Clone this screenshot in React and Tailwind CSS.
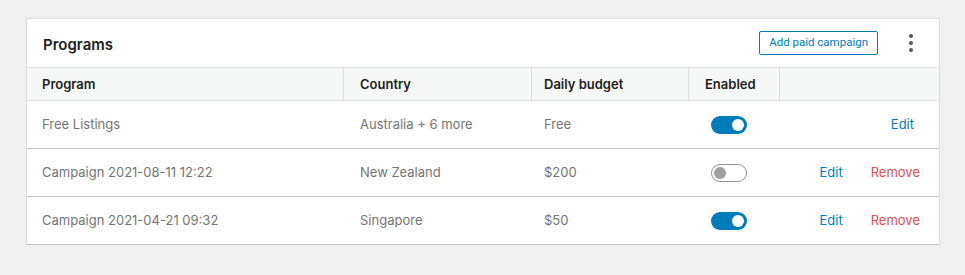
const rows = [
  { name: 'Free Listings', country: 'Australia + 6 more', budget: 'Free', enabled: true, removable: false },
  { name: 'Campaign 2021-08-11 12:22', country: 'New Zealand', budget: '$200', enabled: false, removable: true },
  { name: 'Campaign 2021-04-21 09:32', country: 'Singapore', budget: '$50', enabled: true, removable: true },
]

export default function App() {
  return (
    <div
      className="min-h-[275px] bg-[#f0f0f1] pl-[26px] pt-[18px]"
      style={{ fontFamily: 'Inter, "Noto Sans", sans-serif' }}
    >
      <div className="w-[914px] border-x border-t border-[#dcdcde] bg-white">
        <div className="flex h-[49px] items-center justify-between border-b border-[#e0e0e0] pl-4 pr-[25px]">
          <h2 className="mt-[5px] text-[15px] font-semibold text-[#1e1e1e]">Programs</h2>
          <div className="flex items-center gap-[30px]">
            <button
              className="h-[24px] rounded-[2px] border border-[#007cba] px-[9px] text-[11.5px] text-[#007cba]"
              style={{ fontFamily: 'Roboto, sans-serif' }}
            >
              Add paid campaign
            </button>
            <KebabIcon />
          </div>
        </div>

        <div className="grid h-[33px] grid-cols-[317px_188px_157px_91px_1fr] border-b border-[#e0e0e0] bg-[#f6f7f7] text-[13px] font-semibold text-[#1e1e1e]">
          <div className="flex items-center border-r border-[#e0e0e0] pl-[15px] pt-[2px]">Program</div>
          <div className="flex items-center border-r border-[#e0e0e0] pl-4 pt-[2px]">Country</div>
          <div className="flex items-center border-r border-[#e0e0e0] pl-3 pt-[2px]">Daily budget</div>
          <div className="flex items-center border-r border-[#e0e0e0] pl-4 pt-[2px]">Enabled</div>
          <div />
        </div>

        {rows.map((row) => (
          <div
            key={row.name}
            className="grid h-[48px] grid-cols-[317px_188px_157px_91px_1fr] border-b border-[#c3c4c7] pt-[1px] text-[13px] text-[#757575]"
          >
            <div className="flex items-center pl-[15px]">{row.name}</div>
            <div className="flex items-center pl-4">{row.country}</div>
            <div className="flex items-center pl-3">{row.budget}</div>
            <div className="flex items-center pl-[22px]">
              <Toggle on={row.enabled} />
            </div>
            <div className="flex items-center justify-end gap-[28px] pr-[19px]">
              <button className={row.removable ? 'text-[#007cba]' : 'mr-[6px] text-[#007cba]'}>Edit</button>
              {row.removable && <button className="text-[#d94f4f]">Remove</button>}
            </div>
          </div>
        ))}
      </div>
    </div>
  )
}

function Toggle({ on }) {
  return on ? (
    <span className="flex h-[18px] w-[36px] items-center justify-end rounded-full bg-[#007cba] pr-[3px]">
      <span className="h-[12px] w-[12px] rounded-full bg-white" />
    </span>
  ) : (
    <span className="flex h-[18px] w-[36px] items-center rounded-full border border-[#949494] bg-white pl-[2px]">
      <span className="h-[12px] w-[12px] rounded-full bg-[#a0a0a0]" />
    </span>
  )
}

function KebabIcon() {
  return (
    <svg width="6" height="20" viewBox="0 0 6 20" className="text-[#50575e]">
      <circle cx="3" cy="3" r="2" fill="currentColor" />
      <circle cx="3" cy="10" r="2" fill="currentColor" />
      <circle cx="3" cy="17" r="2" fill="currentColor" />
    </svg>
  )
}
